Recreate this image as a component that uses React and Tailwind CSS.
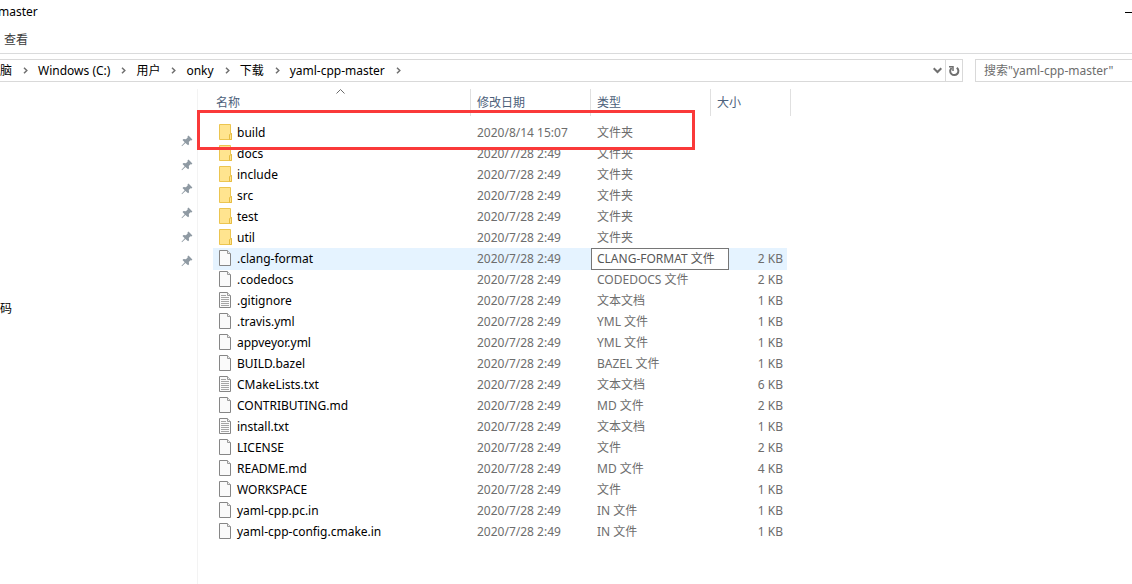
const crumbs = ['脑', 'Windows (C:)', '用户', 'onky', '下载', 'yaml-cpp-master'];

const files = [
  ['folder', 'build', '2020/8/14 15:07', '文件夹', ''],
  ['folder', 'docs', '2020/7/28 2:49', '文件夹', ''],
  ['folder', 'include', '2020/7/28 2:49', '文件夹', ''],
  ['folder', 'src', '2020/7/28 2:49', '文件夹', ''],
  ['folder', 'test', '2020/7/28 2:49', '文件夹', ''],
  ['folder', 'util', '2020/7/28 2:49', '文件夹', ''],
  ['file', '.clang-format', '2020/7/28 2:49', 'CLANG-FORMAT 文件', '2 KB'],
  ['file', '.codedocs', '2020/7/28 2:49', 'CODEDOCS 文件', '2 KB'],
  ['text', '.gitignore', '2020/7/28 2:49', '文本文档', '1 KB'],
  ['file', '.travis.yml', '2020/7/28 2:49', 'YML 文件', '1 KB'],
  ['file', 'appveyor.yml', '2020/7/28 2:49', 'YML 文件', '1 KB'],
  ['file', 'BUILD.bazel', '2020/7/28 2:49', 'BAZEL 文件', '1 KB'],
  ['text', 'CMakeLists.txt', '2020/7/28 2:49', '文本文档', '6 KB'],
  ['file', 'CONTRIBUTING.md', '2020/7/28 2:49', 'MD 文件', '2 KB'],
  ['text', 'install.txt', '2020/7/28 2:49', '文本文档', '1 KB'],
  ['file', 'LICENSE', '2020/7/28 2:49', '文件', '2 KB'],
  ['file', 'README.md', '2020/7/28 2:49', 'MD 文件', '4 KB'],
  ['file', 'WORKSPACE', '2020/7/28 2:49', '文件', '1 KB'],
  ['file', 'yaml-cpp.pc.in', '2020/7/28 2:49', 'IN 文件', '1 KB'],
  ['file', 'yaml-cpp-config.cmake.in', '2020/7/28 2:49', 'IN 文件', '1 KB'],
];

function FolderIcon() {
  return (
    <svg width="13" height="16" viewBox="0 0 13 16" className="mb-px shrink-0" aria-hidden="true">
      <path d="M.5.5h11v9h1v6H.5z" fill="#ffe48f" stroke="#ecc550" />
      <path d="M10.5 15.5V10.5l2-1v6z" fill="#ffe48f" stroke="#e6bc42" />
    </svg>
  );
}

function FileIcon({ lined }) {
  return (
    <svg width="13" height="16" viewBox="0 0 13 16" className="mb-px shrink-0" aria-hidden="true">
      <path d="M.5.5h8l3 3v12H.5z" fill="#fafafa" stroke="#868686" />
      <path d="M8.5.5v3h3" fill="#eee" stroke="#9a9a9a" />
      {lined && <path d="M2 3.5h5M2 5.5h8M2 7.5h8M2 9.5h8M2 11.5h8M2 13.5h8" stroke="#a5a5a5" />}
    </svg>
  );
}

function PinIcon() {
  return (
    <svg width="12" height="12" viewBox="0 0 12 12" aria-hidden="true">
      <path d="M7.5.6L11.4 4.500l-1 1-.9-.2-1.700 1.700.3 2.300-1 1L4.400 7.900 1 11.300.5 10.800 3.700 7.200 1.500 5l1-1 2.400.3L6.700 2.500l-.2-.9z" fill="#8f9aa3" />
    </svg>
  );
}

function Chevron() {
  return (
    <svg width="5" height="7" viewBox="0 0 5 7" fill="none" stroke="#707070" strokeWidth="1.5" aria-hidden="true">
      <path d="M1 .8L3.8 3.5 1 6.2" />
    </svg>
  );
}

function HeaderCell({ children, span, sorted }) {
  return (
    <th colSpan={span} className="h-[33px] p-0 align-top font-normal" aria-sort={sorted ? 'ascending' : undefined}>
      <button
        type="button"
        className={`relative flex h-[27px] w-full items-end border-r border-[#e0e0e0] pb-[3px] text-left leading-5 text-[#4c607a] ${sorted ? 'pl-[3px]' : 'pl-[6px]'}`}
      >
        {children}
        {sorted && (
          <svg width="9" height="5" viewBox="0 0 9 5" fill="none" stroke="#6b6b6b" className="absolute top-0 right-[125px]" aria-hidden="true">
            <path d="M.5 4.5l4-4 4 4" />
          </svg>
        )}
      </button>
    </th>
  );
}

export default function App() {
  return (
    <div className="flex min-h-screen flex-col overflow-hidden bg-white font-['Noto_Sans','Noto_Sans_CJK_SC',sans-serif] text-[12px] text-black">
      <header>
        <div className="flex h-6 items-center justify-between">
          <h1 className="-ml-[2px]">master</h1>
          <button type="button" aria-label="最小化" className="flex h-6 w-[7px] items-center">
            <span className="h-px w-full bg-black" />
          </button>
        </div>
        <nav className="flex h-[30px] items-end border-b border-[#dadbdc] pb-[3px] pl-1">
          <button type="button" className="leading-5 text-[#3b3b3b]">查看</button>
        </nav>
        <div className="flex items-center gap-3 py-[5px]">
          <div className="flex h-[23px] flex-1 items-center border-y border-r border-[#d9d9d9]">
            <nav aria-label="路径" className="flex flex-1 items-center">
              {crumbs.map((c) => (
                <span key={c} className="flex items-center">
                  <button type="button" className="whitespace-nowrap">{c}</button>
                  <span className="mr-[10px] ml-[11px]"><Chevron /></span>
                </span>
              ))}
            </nav>
            <button type="button" aria-label="历史记录" className="px-[3px]">
              <svg width="9" height="7" viewBox="0 0 9 7" fill="none" stroke="#707070" strokeWidth="2" aria-hidden="true">
                <path d="M.7 1.2l3.8 3.8 3.8-3.8" />
              </svg>
            </button>
            <button type="button" aria-label="刷新" className="flex h-full w-[17px] items-center justify-center border-l border-[#d9d9d9]">
              <svg width="12" height="12" viewBox="0 0 12 12" fill="none" stroke="#707070" strokeWidth="2" aria-hidden="true">
                <path d="M8.8 2.800A4.100 4.100 0 1 1 3.600 2.900" />
                <path d="M1 1.700H5V6" strokeWidth="1.5" />
              </svg>
            </button>
          </div>
          <input
            type="search"
            aria-label="搜索"
            placeholder={'搜索"yaml-cpp-master"'}
            className="h-[23px] w-[157px] border-y border-l border-[#d9d9d9] pl-2 outline-none placeholder:text-[#6d6d6d]"
          />
        </div>
      </header>

      <div className="flex flex-1 pt-[2px]">
        <aside className="w-[198px] shrink-0 border-r border-[#f3f3f3] pt-10">
          <ul>
            {[1, 2, 3, 4, 5, 6].map((n) => (
              <li key={n} className="flex h-6 items-center justify-end pr-1"><PinIcon /></li>
            ))}
          </ul>
          <p className="mt-6 h-6 leading-6">码</p>
        </aside>

        <main className="relative flex-1 pl-[15px]">
          <table className="w-[578px] table-fixed border-collapse">
            <colgroup>
              <col className="w-[258px]" />
              <col className="w-[120px]" />
              <col className="w-[120px]" />
              <col className="w-[76px]" />
              <col className="w-[4px]" />
            </colgroup>
            <thead>
              <tr>
                <HeaderCell sorted>名称</HeaderCell>
                <HeaderCell>修改日期</HeaderCell>
                <HeaderCell>类型</HeaderCell>
                <HeaderCell span={2}>大小</HeaderCell>
              </tr>
            </thead>
            <tbody>
              {files.map(([kind, name, date, type, size]) => {
                const active = name === '.clang-format';
                const bg = active ? 'bg-[#e5f3ff] shadow-[0_1px_0_#e5f3ff]' : '';
                return (
                  <tr key={name} className="h-[21px] leading-[21px] whitespace-nowrap text-[#6d6d6d]">
                    <td className={`p-0 ${bg}`}>
                      <span className="flex h-[21px] items-center gap-[5px] pl-[6px] text-black">
                        {kind === 'folder' ? <FolderIcon /> : <FileIcon lined={kind === 'text'} />}
                        {name}
                      </span>
                    </td>
                    <td className={`p-0 pl-[6px] ${bg}`}>{date}</td>
                    <td className={`relative p-0 pl-[6px] ${bg}`}>
                      {active ? (
                        <span className="absolute top-0 left-0 z-10 h-[22px] min-w-[138px] border border-[#767676] bg-white px-[5px] leading-5 text-[#575757]">{type}</span>
                      ) : type}
                    </td>
                    <td className={`p-0 pr-1 text-right ${bg}`}>{size}</td>
                    <td className="p-0" />
                  </tr>
                );
              })}
            </tbody>
          </table>
          <div className="pointer-events-none absolute top-[21px] -left-px h-10 w-[498px] border-3 border-[#fa3939]" />
        </main>
      </div>
    </div>
  );
}
